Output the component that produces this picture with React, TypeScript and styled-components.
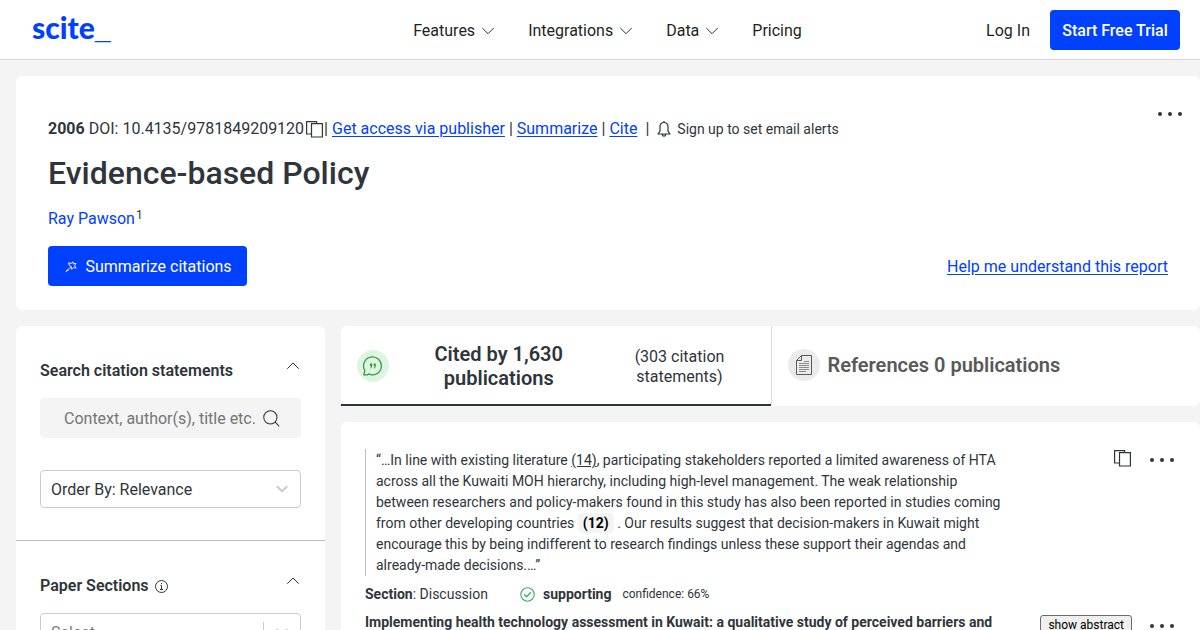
import React from "react";
import styled, { createGlobalStyle } from "styled-components";

const ink = "#2f353b";
const blue = "#0040ff";

const GlobalStyle = createGlobalStyle`
  *, *::before, *::after { box-sizing: border-box; }
  body {
    margin: 0;
    background: #f4f4f4;
    color: ${ink};
    font: 400 16px/24px Roboto, "Liberation Sans", sans-serif;
  }
  h1, h2, h3, p, blockquote { margin: 0; }
  button, input, select { font: inherit; color: inherit; }
  svg { display: block; flex: none; }
`;

const Header = styled.header`
  display: grid;
  grid-template-columns: 1fr auto 1fr;
  align-items: center;
  height: 60px;
  padding: 0 20px 0 32px;
  background: #fff;
  border-bottom: 1px solid #d6d6d6;
`;

const Logo = styled.a`
  justify-self: start;
  padding-bottom: 2px;
  color: ${blue};
  font: 900 30px/32px Lato, sans-serif;
  text-decoration: none;
`;

const LogoCursor = styled.span`
  font: 700 28px/32px "Liberation Sans", sans-serif;
`;

const Nav = styled.nav`
  display: flex;
  gap: 34px;
  padding: 2px 0 0 3px;
  color: #1d1f22;
`;

const NavButton = styled.button`
  display: flex;
  align-items: center;
  gap: 7px;
  padding: 0;
  border: 0;
  background: none;
`;

const NavLink = styled.a`
  color: #1d1f22;
  text-decoration: none;
`;

const LoginLink = styled(NavLink)`
  padding-top: 2px;
`;

const Account = styled.div`
  display: flex;
  justify-content: flex-end;
  align-items: center;
  gap: 20px;
`;

const TrialButton = styled.button`
  width: 130px;
  height: 40px;
  padding: 2px 0 0;
  border: 0;
  border-radius: 4px;
  background: ${blue};
  color: #fff;
  font-weight: 500;
`;

const Page = styled.main`
  display: flex;
  flex-direction: column;
  gap: 16px;
  padding: 16px 0 16px 16px;
`;

const Card = styled.section`
  background: #fff;
  border-radius: 6px;
`;

const ReportCard = styled(Card)`
  display: flex;
  flex-direction: column;
  padding: 24px 18px 24px 32px;
`;

const ReportTop = styled.div`
  display: flex;
  justify-content: space-between;
`;

const MetaRow = styled.div`
  display: flex;
  align-items: center;
  gap: 4px;
  padding-top: 17px;
`;

const Link = styled.a`
  color: ${blue};
  text-decoration: underline;
  text-underline-offset: 2px;
`;

const HelpLink = styled(Link)`
  padding-top: 2px;
`;

const IconButton = styled.button`
  display: flex;
  padding: 0;
  border: 0;
  background: none;
`;

const CollapseButton = styled(IconButton)`
  padding: 4px 2px 0;
`;

const MoreButton = styled(IconButton)`
  align-self: flex-start;
  padding: 12px 0;
`;

const RowMoreButton = styled(IconButton)`
  padding: 9px 0;
`;

const CopyButton = styled(IconButton)`
  margin: 0 -3px 0 -2px;
`;

const AlertButton = styled(IconButton)`
  align-items: center;
  gap: 6px;
  padding-left: 4px;
  font-size: 14px;
`;

const AlertDivider = styled.span`
  padding-left: 4px;
`;

const Title = styled.h1`
  padding: 11px 0 12px;
  font-size: 32px;
  line-height: 42px;
  font-weight: 500;
`;

const Authors = styled.p`
  display: flex;
  padding-top: 1px;
`;

const AuthorLink = styled.a`
  color: ${blue};
  text-decoration: none;
`;

const Affiliation = styled.span`
  padding-left: 1px;
  font-size: 12px;
  line-height: 16px;
`;

const ReportActions = styled.div`
  display: flex;
  justify-content: space-between;
  align-items: center;
  padding: 15px 14px 0 0;
`;

const SummarizeButton = styled.button`
  display: flex;
  align-items: center;
  justify-content: center;
  gap: 8px;
  width: 199px;
  height: 40px;
  padding: 2px 0 0 2px;
  border: 0;
  border-radius: 4px;
  background: ${blue};
  color: #fff;
`;

const Columns = styled.div`
  display: grid;
  grid-template-columns: 309px minmax(0, 1fr);
  gap: 16px;
`;

const Sidebar = styled(Card)`
  min-height: 400px;
`;

const FilterGroup = styled.div`
  padding: 32px 24px;
  & + & { border-top: 1px solid #bdbdbd; }
`;

const FilterHead = styled.div`
  display: flex;
  justify-content: space-between;
  align-items: flex-start;
  height: 40px;
`;

const FilterTitle = styled.h3`
  display: flex;
  align-items: center;
  gap: 6px;
  padding-top: 1px;
  font-size: 16px;
  line-height: 24px;
  font-weight: 600;
`;

const SearchBox = styled.label`
  display: flex;
  align-items: center;
  height: 40px;
  padding: 0 21px 0 24px;
  border-radius: 4px;
  background: #f4f4f4;
`;

const SearchInput = styled.input`
  flex: 1;
  min-width: 0;
  padding: 2px 0 0;
  border: 0;
  outline: 0;
  background: none;
  &::placeholder { color: #757575; opacity: 1; }
`;

const SelectBox = styled.label<{ $top?: number }>`
  display: flex;
  align-items: center;
  height: 38px;
  margin-top: ${(p) => p.$top ?? 0}px;
  padding-right: 12px;
  border: 1px solid #ccc;
  border-radius: 4px;
`;

const Select = styled.select<{ $muted?: boolean }>`
  flex: 1;
  min-width: 0;
  padding: 2px 10px 0;
  border: 0;
  outline: 0;
  appearance: none;
  background: none;
  color: ${(p) => (p.$muted ? "#808080" : ink)};
`;

const SelectDivider = styled.span`
  width: 1px;
  height: 20px;
  margin-right: 12px;
  background: #ccc;
`;

const Content = styled.div`
  display: flex;
  flex-direction: column;
  gap: 16px;
`;

const Tabs = styled(Card)`
  display: grid;
  grid-template-columns: 1fr 1fr;
  height: 80px;
`;

const Tab = styled.button<{ $active?: boolean }>`
  display: flex;
  align-items: center;
  gap: ${(p) => (p.$active ? 12 : 8)}px;
  padding: ${(p) => (p.$active ? "2px 16px 0" : "0 16px")};
  border: 0;
  border-bottom: 2px solid ${(p) => (p.$active ? ink : "transparent")};
  border-left: ${(p) => (p.$active ? "0" : "1px solid #dedede")};
  background: none;
  color: ${(p) => (p.$active ? ink : "#595959")};
`;

const TabTitle = styled.span<{ $grow?: boolean }>`
  flex: ${(p) => (p.$grow ? "5 1 0" : "none")};
  font-size: 20px;
  line-height: 24px;
  font-weight: 600;
`;

const TabNote = styled.span`
  flex: 4 1 0;
  padding-top: 2px;
  line-height: 20px;
`;

const Round = styled.span<{ $bg: string; $gap?: number }>`
  display: flex;
  flex: none;
  align-items: center;
  justify-content: center;
  width: 32px;
  height: 32px;
  margin-right: ${(p) => p.$gap ?? 0}px;
  border-radius: 50%;
  background: ${(p) => p.$bg};
`;

const Statement = styled(Card)`
  display: flex;
  flex-direction: column;
  gap: 8px;
  padding: 27px 26px 24px 24px;
`;

const Split = styled.div`
  display: flex;
  justify-content: space-between;
  gap: 28px;
`;

const Quote = styled.blockquote`
  max-width: 648px;
  padding: 1px 0 0 10px;
  border-left: 1px solid #bdbdbd;
  font-size: 14px;
  line-height: 21px;
`;

const CiteLink = styled.a`
  color: inherit;
`;

const CiteMark = styled.strong`
  padding: 2px 5px;
  border-radius: 4px;
  background: #f4f4f4;
  color: #000;
`;

const Actions = styled.div`
  display: flex;
  flex: none;
  align-items: flex-start;
  gap: 18px;
`;

const QuoteCopyButton = styled(IconButton)`
  padding: 1px 1px 0 0;
`;

const Tally = styled.div`
  display: flex;
  align-items: center;
  gap: 8px;
  font-size: 14px;
  line-height: 20px;
`;

const SectionName = styled.span`
  padding-right: 24px;
`;

const Small = styled.span`
  padding-left: 3px;
  font-size: 12px;
`;

const SourceTitle = styled.h2`
  max-width: 648px;
  font-size: 14px;
  line-height: 20px;
  font-weight: 700;
`;

const SourceActions = styled(Actions)`
  padding-top: 3px;
`;

const AbstractButton = styled.button`
  padding: 0 7px;
  border: 1px solid #6b6b6b;
  border-radius: 3px;
  background: #efefef;
  color: #000;
  font-size: 12px;
  line-height: 18px;
`;

const Chevron = ({ up, color = "#333", weight = 1 }: { up?: boolean; color?: string; weight?: number }) => (
  <svg width="12" height="8" viewBox="0 0 12 8" fill="none" stroke={color} strokeWidth={weight} strokeLinecap="round" strokeLinejoin="round" aria-hidden="true">
    <path d={up ? "M.6 6.4 6 1l5.4 5.4" : weight > 1 ? "M1.4 1.7 6 6.2l4.6-4.5" : "M.6 1.3 6 6.700l5.400-5.400"} />
  </svg>
);

const CopyIcon = () => (
  <svg width="17" height="17" viewBox="0 0 17 17" fill="none" stroke={ink} strokeWidth="1.2" aria-hidden="true">
    <path d="M5.5 13H.6V.6h10v2M5.500 2.600h10.900v13.400H5.500z" />
  </svg>
);

const Dots = () => (
  <svg width="24" height="4" viewBox="0 0 24 4" fill={ink} aria-hidden="true">
    <circle cx="2" cy="2" r="2" />
    <circle cx="12" cy="2" r="2" />
    <circle cx="22" cy="2" r="2" />
  </svg>
);

const Bell = () => (
  <svg width="14" height="16" viewBox="0 0 14 16" fill="none" stroke={ink} strokeWidth="1.2" strokeLinejoin="round" aria-hidden="true">
    <path d="M7 1.5C4.500 1.500 3 3.200 3 5.700v4.500L1 13h12l-2-2.800V5.700C11 3.200 9.500 1.500 7 1.500zM7 0v1.500M5.300 13.500a1.700 1.700 0 0 0 3.400 0" />
  </svg>
);

const Wand = () => (
  <svg width="12" height="12" viewBox="0 0 12 12" fill="none" stroke="#fff" strokeWidth=".9" strokeLinejoin="round" aria-hidden="true">
    <path d="M3.600 1.600 6 2.600 8 .9l.3 2 2.700-.5-1.400 2.400 1.500 2.300-2.600-.4L6.600 8.200l-.4-2.700-2.100-1.400zM6.200 5.800.6 10.700M1.200 10l2.600-.9" />
  </svg>
);

const SearchIcon = () => (
  <svg width="17" height="17" viewBox="0 0 18 18" fill="none" stroke={ink} strokeWidth="1.1" strokeLinecap="round" aria-hidden="true">
    <circle cx="7.8" cy="7.8" r="7" />
    <path d="m12.800 12.800 4 4" />
  </svg>
);

const InfoIcon = () => (
  <svg width="13" height="13" viewBox="0 0 13 13" fill="none" stroke={ink} aria-hidden="true">
    <circle cx="6.5" cy="6.5" r="6" />
    <path d="M5.500 5.500h1v4M5 9.500h3M6.500 3v1.200" />
  </svg>
);

const QuoteIcon = () => (
  <svg width="20" height="20" viewBox="0 0 20 20" fill="none" stroke="#2e9e44" strokeWidth="1.3" strokeLinejoin="round" aria-hidden="true">
    <path d="M.8 18.800 1.800 14.400A8.900 8.900 0 1 1 5.600 17.900L4.500 18.800z" />
    <path fill="#2e9e44" stroke="none" d="M7 7.500h2.200v2.300c0 1.500-.6 2.500-1.800 2.800v-.8c.5-.3.7-.7.7-1.500H7zM10.600 7.500h2.200v2.300c0 1.500-.6 2.500-1.800 2.800v-.8c.5-.3.7-.7.7-1.500h-1.100z" />
  </svg>
);

const PaperIcon = () => (
  <svg width="16" height="20" viewBox="0 0 16 20" fill="none" stroke="#595959" aria-hidden="true">
    <path d="M5.500.5h10v19H.5v-14zM5.500.5v5h-5" />
    <path stroke="#8a8a8a" d="M8 6.500h5M3 8.500h10M3 10.500h10M3 12.500h10M3 14.500h10M3 16.500h7" />
  </svg>
);

const SupportIcon = () => (
  <svg width="15" height="15" viewBox="0 0 15 15" fill="none" stroke="#3fae6c" strokeWidth="1.1" strokeLinecap="round" strokeLinejoin="round" aria-hidden="true">
    <circle cx="7.5" cy="7.5" r="6.7" />
    <path strokeWidth="1.4" d="m4.600 7.700 2 2 3.800-3.900" />
  </svg>
);

export default function App() {
  return (
    <>
      <GlobalStyle />
      <Header>
        <Logo href="#">scite<LogoCursor>_</LogoCursor></Logo>
        <Nav>
          {["Features", "Integrations", "Data"].map((name) => (
            <NavButton key={name}>
              {name}
              <Chevron />
            </NavButton>
          ))}
          <NavLink href="#">Pricing</NavLink>
        </Nav>
        <Account>
          <LoginLink href="#">Log In</LoginLink>
          <TrialButton>Start Free Trial</TrialButton>
        </Account>
      </Header>
      <Page>
        <ReportCard>
          <ReportTop>
            <MetaRow>
              <strong>2006</strong>
              <span>DOI: 10.4135/9781849209120</span>
              <CopyButton aria-label="Copy DOI"><CopyIcon /></CopyButton>
              <span>|</span>
              <Link href="#">Get access via publisher</Link>
              <span>|</span>
              <Link href="#">Summarize</Link>
              <span>|</span>
              <Link href="#">Cite</Link>
              <AlertDivider>|</AlertDivider>
              <AlertButton><Bell />Sign up to set email alerts</AlertButton>
            </MetaRow>
            <MoreButton aria-label="More"><Dots /></MoreButton>
          </ReportTop>
          <Title>Evidence-based Policy</Title>
          <Authors>
            <AuthorLink href="#">Ray Pawson</AuthorLink>
            <Affiliation>1</Affiliation>
          </Authors>
          <ReportActions>
            <SummarizeButton><Wand />Summarize citations</SummarizeButton>
            <HelpLink href="#">Help me understand this report</HelpLink>
          </ReportActions>
        </ReportCard>
        <Columns>
          <Sidebar>
            <FilterGroup>
              <FilterHead>
                <FilterTitle>Search citation statements</FilterTitle>
                <CollapseButton aria-label="Collapse"><Chevron up /></CollapseButton>
              </FilterHead>
              <SearchBox>
                <SearchInput aria-label="Search" placeholder="Context, author(s), title etc." />
                <SearchIcon />
              </SearchBox>
              <SelectBox $top={32}>
                <Select aria-label="Order by"><option>Order By: Relevance</option></Select>
                <Chevron color="#ccc" weight={2} />
              </SelectBox>
            </FilterGroup>
            <FilterGroup>
              <FilterHead>
                <FilterTitle>Paper Sections<InfoIcon /></FilterTitle>
                <CollapseButton aria-label="Collapse"><Chevron up /></CollapseButton>
              </FilterHead>
              <SelectBox>
                <Select aria-label="Paper sections" $muted><option>Select...</option></Select>
                <SelectDivider />
                <Chevron color="#ccc" weight={2} />
              </SelectBox>
            </FilterGroup>
          </Sidebar>
          <Content>
            <Tabs>
              <Tab $active>
                <Round $bg="#dff5e1" $gap={4}><QuoteIcon /></Round>
                <TabTitle $grow>Cited by 1,630 publications</TabTitle>
                <TabNote>(303 citation statements)</TabNote>
              </Tab>
              <Tab>
                <Round $bg="#ebebeb"><PaperIcon /></Round>
                <TabTitle>References 0 publications</TabTitle>
              </Tab>
            </Tabs>
            <Statement>
              <Split>
                <Quote>
                  “…In line with existing literature <CiteLink href="#">(14)</CiteLink>, participating stakeholders reported a limited awareness of HTA across all the Kuwaiti MOH hierarchy, including high-level management. The weak relationship between researchers and policy-makers found in this study has also been reported in studies coming from other developing countries <CiteMark>(12)</CiteMark> . Our results suggest that decision-makers in Kuwait might encourage this by being indifferent to research findings unless these support their agendas and already-made decisions.…”
                </Quote>
                <Actions>
                  <QuoteCopyButton aria-label="Copy"><CopyIcon /></QuoteCopyButton>
                  <RowMoreButton aria-label="More"><Dots /></RowMoreButton>
                </Actions>
              </Split>
              <Tally>
                <SectionName><strong>Section</strong>: Discussion</SectionName>
                <SupportIcon />
                <strong>supporting</strong>
                <Small>confidence: 66%</Small>
              </Tally>
              <Split>
                <SourceTitle>Implementing health technology assessment in Kuwait: a qualitative study of perceived barriers and facilitators</SourceTitle>
                <SourceActions>
                  <AbstractButton>show abstract</AbstractButton>
                  <RowMoreButton aria-label="More"><Dots /></RowMoreButton>
                </SourceActions>
              </Split>
            </Statement>
          </Content>
        </Columns>
      </Page>
    </>
  );
}
